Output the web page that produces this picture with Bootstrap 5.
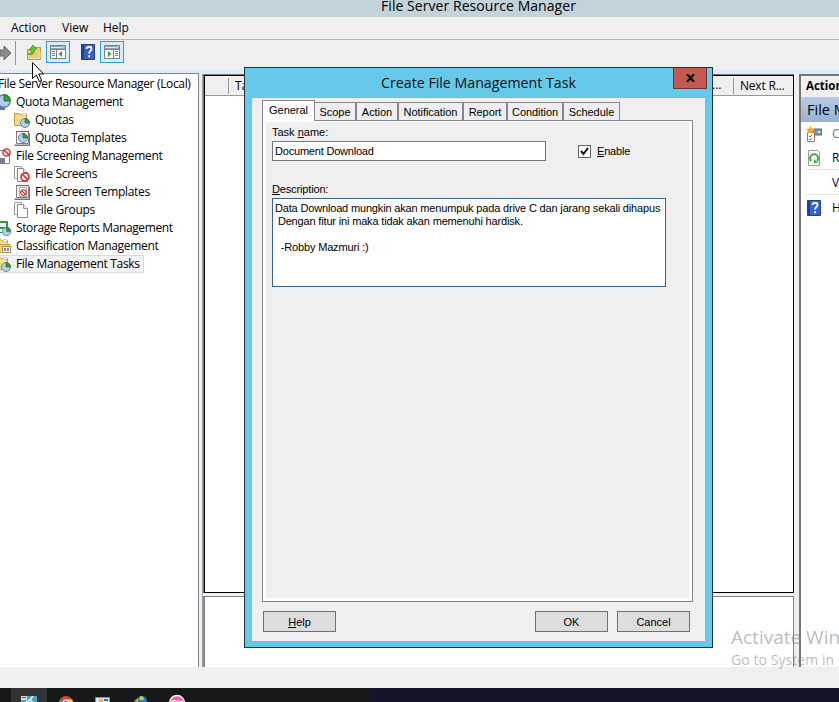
<!DOCTYPE html>
<html lang="en">
<head>
<meta charset="utf-8">
<meta name="viewport" content="width=device-width, initial-scale=1">
<title>File Server Resource Manager</title>
<link href="https://cdn.jsdelivr.net/npm/bootstrap@5.3.0/dist/css/bootstrap.min.css" rel="stylesheet">
<style>
body{width:839px;height:702px;margin:0;background:#efefef;color:#000;font:12px/18px "Open Sans","Noto Sans",sans-serif;white-space:nowrap}
svg{display:block;flex:none}
.titlebar{height:17px;background:#c2d4da}
.win-title{font-size:14px;line-height:20px;margin:-4px 0 0 381px;letter-spacing:.06px}
.menus{height:23px;border-bottom:1px solid #b5b5b5;padding:2px 0 0 11px}
.menus span{line-height:18px}
.m1{width:51px}.m2{width:41px}
.tools{height:33px;padding-top:1px}
.arrow-btn{width:16px;height:24px;border-right:1px solid #999}
.up-ic{margin:4px 4px 0 10px}
.help-ic{margin:3px 5px 0 11px}
.tool-on{width:24px;height:22px;border:1px solid #2a9fd8;background:#d9edf9}
.panes{height:594px}
.tools::after{content:"";position:absolute;left:0;top:69px;width:839px;height:5px;background:#e3ebfa}
.tree{width:199px;position:relative;border-top:1px solid #80848c;border-right:1px solid #80848c;background:#fff;padding-top:1px;letter-spacing:-.32px}
.tree .tr{height:18px;gap:5px}
.t0{margin-left:-2px;letter-spacing:-.34px}
.t8{letter-spacing:-.4px}
.lv0{margin-left:-5px}.lv1{margin-left:14px}
.tree .picked{width:144px;background:#f2f2f2;border:1px solid #d9d9d9;border-left:0}
.splitter{width:4px;border-right:1px solid #a0a0a0}
.center-col{width:591px;padding-top:1px;position:relative}
.list-pane{height:519px;background:#fff;border:solid #777;border-width:1px 0 0 1px}
.list-in{height:518px;border:1px solid #000}
.list-head{height:20px;background:#efefef;border-bottom:1px solid #999}
.hd{border-left:1px solid #999;height:16px;margin-top:2px;padding-left:6px;line-height:16px;letter-spacing:-.2px}
.hd-blank{width:23px}.hd-task{width:475px}.hd-dots{width:30px;padding-left:9px;letter-spacing:0}
.low-pane{height:71px;margin-top:3px;background:#fff;border:solid #80848c;border-width:1px 1px 0 2px}
.gap-r{width:5px}
.side{width:40px;height:593px;margin-top:1px;position:relative;background:#fff;border:solid #777;border-width:2px 0 0 2px}
.side-h{height:21px;font-weight:700;padding-left:5px;line-height:20px;font-size:11.5px;background:#f0f0f0}
.side-g{height:25px;background:linear-gradient(#b7cbe3,#96b2d3);font-size:14.5px;line-height:25px;padding-left:6px}
.side-i{height:24px;padding-left:5px;gap:10px}
.side-i .ic{width:16px;flex:none}
.q-ic{margin:0 1px}
.side-line{height:1px;background:#e2e2e2;margin:-1px 0 0 5px}
.side-line+.side-i{height:25px;padding-top:1px}
.bar-status{height:21px;background:#efefef}
.taskbar{height:14px;background:linear-gradient(90deg,#171918 370px,#14152a 370px)}
.tb-run{width:36px;background:#333;margin-left:11px}
.dlg{left:244px;top:67px;width:469px;height:581px;background:#66c9ea;border:1px solid #25323a;padding:29px 7px 6px;font:11px/13px "Liberation Sans",Arial,sans-serif}
.dlg-title{left:0;right:0;top:5px;text-align:center;font:14.2px/20px "Open Sans",sans-serif;color:#111}
.dlg-x{right:5px;top:0;width:34px;height:21px;background:#c35a51;border:1px solid #6d3433;border-top:0}
.dlg-in{height:545px;background:#efefef;border:solid #8bb4c6;border-width:1px 0;padding:2px 12px 0 10px}
.tabs-row{height:20px}
.tb{height:18px;border:1px solid #85858f;border-bottom:0;background:#efefef;text-align:center;line-height:19px;letter-spacing:-.05px}
.tb.on{height:21px;background:#fff;width:53px;line-height:19px;z-index:1}
.w2{width:41px;border-left:0}.w3{width:42px}.w4{width:65px}.w5{width:44px}.w6{width:56px}.w7{width:57px}
.pg{height:482px;border:1px solid #85858f;box-shadow:inset -3px -3px #fff,inset 3px 1px #fff;padding:5px 9px}
.fld{width:274px;height:20px;margin-top:2px;border:1px solid #777;background:#fff;padding:3px 2px;line-height:12px;letter-spacing:-.2px}
.ck{width:13px;height:13px;margin:2px 6px 0 32px;border:1px solid #666;background:#fff}
.en-lb{margin-top:3px;letter-spacing:-.2px}
.desc-lb{margin:22px 0 2px;letter-spacing:-.15px}
.memo{width:394px;height:89px;border:1px solid #36648b;background:#fff;padding:3px 2px;white-space:pre;letter-spacing:-.165px}
.foot{margin:9px 3px 0 1px}
.b3{width:73px;height:21px;border:1px solid #707070;background:#ddd;text-align:center;line-height:20px}
.b-last{margin-left:9px}
.wm{left:731px;top:625px;width:108px;color:rgba(130,130,130,.55);overflow:hidden}
.wm1{font-size:19px;line-height:24px}.wm2{font-size:14px;line-height:21px;letter-spacing:.06px}
.ptr{left:32px;top:62px}
u{text-underline-offset:1px}
</style>
<script src="https://cdn.jsdelivr.net/npm/bootstrap@5.3.0/dist/js/bootstrap.bundle.min.js"></script>
</head>
<body class="overflow-hidden position-relative">
<svg width="0" height="0" class="position-absolute">
<defs>
<symbol id="pie" viewBox="0 0 10 10"><circle cx="5" cy="5" r="4.500" fill="#b5cdec" stroke="#6683ad"/><path d="M5 5V.5A4.500 4.500 0 0 1 9.500 5z" fill="#35a02f" stroke="#216c20" stroke-width=".6"/></symbol>
<symbol id="no" viewBox="0 0 10 10"><circle cx="5" cy="5" r="4" fill="#fbe3e2" stroke="#cf2e2e" stroke-width="1.600"/><path d="M2.300 2.300l5.400 5.400" stroke="#cf2e2e" stroke-width="1.500"/></symbol>
<symbol id="folder" viewBox="0 0 16 16"><path d="M.5 1.500h5l1 1h6v11H.5z" fill="#f3d680" stroke="#c59b45"/><path d="M8 1.500h4v2H8z" fill="#fff" stroke="#ccb27a" stroke-width=".5"/><path d="M1 5h11v1H1z" fill="#fbebb3"/></symbol>
<symbol id="page" viewBox="0 0 16 16"><path d="M.5.500h7v12h-7z" fill="#fff" stroke="#999"/><path d="M3.500 2.500h6l4 4v9h-10z" fill="#fff" stroke="#888"/><path d="M9.500 2.500v4h4" fill="#eee" stroke="#999"/></symbol>
<symbol id="tmpl" viewBox="0 0 16 16"><path d="M2.500 1.500h12v12h-12z" fill="#f5f5f5" stroke="#8b7c78"/><path d="M2 1.500h13" stroke="#a35b4d" stroke-width="1.200"/><path d="M.5 15.200h15V3" fill="none" stroke="#777" stroke-width="1.400"/></symbol>
<symbol id="help" viewBox="0 0 14 16"><path d="M.5.500h13v15H.5z" fill="#3762c5" stroke="#233f94"/><path d="M1 1h2v14H1z" fill="#203f9c"/><path d="M5.500 5c0-3 5-3 5 0 0 2-2.400 2-2.400 4.600" fill="none" stroke="#fff" stroke-width="1.800"/><path d="M7.200 11.300H9v2H7.200z" fill="#fff"/></symbol>
<symbol id="console" viewBox="0 0 16 14"><path d="M.5.500h15v13H.5z" fill="#fff" stroke="#75818d"/><path d="M1 1h14v3H1z" fill="#9aa4ae"/><path d="M1 2.500h11" stroke="#e4e8ec"/><path d="M12.500 1.500h2v1h-2z" fill="#fff"/><path d="M1 4.500h14" stroke="#75818d"/></symbol>
</defs>
</svg>

<div class="titlebar d-flex"><div class="win-title">File Server Resource Manager</div></div>
<div class="menus d-flex"><span class="m1">Action</span><span class="m2">View</span><span>Help</span></div>
<div class="tools d-flex align-items-start">
  <div class="arrow-btn d-flex align-items-center"><svg width="12" height="16"><path d="M0 5h4V1l7 7-7 7v-4H0z" fill="#8b8b8b" stroke="#686868"/></svg></div>
  <svg width="16" height="16" class="up-ic"><path d="M1.500 4.500h5l1-2h7v12h-13z" fill="#eccb73" stroke="#bf973e"/><path d="M2 13.500h12V7" fill="none" stroke="#f8e6a7"/><path d="M2 9C5 9 6 7 5.500 5H3l4-5 4 4H8.500C9 8 6 11 2 9z" fill="#58c936" stroke="#2f9a27" stroke-width=".7"/></svg>
  <div class="tool-on d-flex align-items-center justify-content-center"><svg width="16" height="14"><use href="#console"/><path d="M6.500 5v8" stroke="#75818d"/><path d="M2 6.500h3M2 8.500h3M2 10.500h3" stroke="#5a86b5"/><path d="M12 6v6L8.500 9z" fill="#35a526"/></svg></div>
  <svg width="14" height="16" class="help-ic"><use href="#help"/></svg>
  <div class="tool-on d-flex align-items-center justify-content-center"><svg width="16" height="14"><use href="#console"/><path d="M9.500 5v8" stroke="#75818d"/><path d="M11 6.500h3M11 8.500h3M11 10.500h3" stroke="#5a86b5"/><path d="M4 6v6l3.500-3z" fill="#35a526"/></svg></div>
</div>

<div class="panes d-flex">
  <div class="tree flex-shrink-0">
    <div class="tr t0">File Server Resource Manager (Local)</div>
    <div class="tr d-flex align-items-center lv0"><svg width="16" height="16"><path d="M2 12h8v4H2z" fill="#68798a"/><use href="#pie" x="2" width="14" height="14"/></svg><span>Quota Management</span></div>
    <div class="tr d-flex align-items-center lv1"><svg width="16" height="16"><use href="#folder"/><use href="#pie" x="6" y="6" width="10" height="10"/></svg><span>Quotas</span></div>
    <div class="tr d-flex align-items-center lv1"><svg width="16" height="16"><use href="#tmpl"/><use href="#pie" x="4" y="3" width="10" height="10"/></svg><span>Quota Templates</span></div>
    <div class="tr d-flex align-items-center lv0"><svg width="16" height="16"><path d="M4.500 2.500h10v13h-10z" fill="#fff" stroke="#888"/><path d="M2 10h8v5H2z" fill="#718092"/><use href="#no" x="7" y="0" width="9" height="9"/></svg><span>File Screening Management</span></div>
    <div class="tr d-flex align-items-center lv1"><svg width="16" height="16"><use href="#page"/><use href="#no" x="6" y="6" width="10" height="10"/></svg><span>File Screens</span></div>
    <div class="tr d-flex align-items-center lv1"><svg width="16" height="16"><use href="#tmpl"/><path d="M5.500 3.500h7v9h-7z" fill="#fff" stroke="#aaa"/><use href="#no" x="6" y="5" width="7" height="7"/></svg><span>File Screen Templates</span></div>
    <div class="tr d-flex align-items-center lv1"><svg width="16" height="16"><use href="#page"/></svg><span>File Groups</span></div>
    <div class="tr d-flex align-items-center lv0"><svg width="16" height="16"><path d="M1 1h12v12H1z" fill="#2e9e44"/><path d="M4 3h7v4H4zM4 9h6v3H4z" fill="#eaf6eb"/><use href="#pie" x="7" y="7" width="9" height="9"/></svg><span class="t8">Storage Reports Management</span></div>
    <div class="tr d-flex align-items-center lv0"><svg width="16" height="16"><use href="#folder"/><path d="M2 6.500h13v8H2z" fill="#f0cf76" stroke="#c59b45"/><path d="M7.500 8.500h8v6h-8z" fill="#fff" stroke="#b58b38"/><path d="M9 10h2v3H9zM12 10h2v3h-2z" fill="#6b8bc0"/></svg><span>Classification Management</span></div>
    <div class="tr d-flex align-items-center picked"><svg width="16" height="16" class="lv0"><use href="#folder"/><use href="#pie" x="6" y="6" width="10" height="10"/></svg><span>File Management Tasks</span></div>
  </div>
  <div class="splitter flex-shrink-0"></div>
  <div class="center-col flex-shrink-0">
    <div class="list-pane"><div class="list-in"><div class="list-head d-flex"><div class="hd-blank"></div><div class="hd hd-task">Task Name</div><div class="hd-dots">...</div><div class="hd">Next R...</div></div></div></div>
    <div class="low-pane"></div>
  </div>
  <div class="gap-r flex-shrink-0"></div>
  <div class="side flex-shrink-0 overflow-hidden">
    <div class="side-h">Actions</div>
    <div class="side-g">File Management Tasks</div>
    <div class="side-i d-flex align-items-center"><svg width="16" height="16"><path d="M7 3h9v6H7z" fill="#8293a5" stroke="#59697a"/><path d="M12 5h2v2h-2z" fill="#dfe5ea"/><path d="M1.500 6.500h7v9h-7z" fill="#fff" stroke="#a57a39"/><path d="M3 10l1 1 2-2M3 13l1 1 2-2" stroke="#3989cd" fill="none"/><path d="M4.500 0l1.300 2.500L9 3 7 5l.6 3-3.100-1.500L1.500 8 2 5 0 3l3.200-.5z" fill="#f5a623"/></svg><span class="text-secondary">Create File Management Task...</span></div>
    <div class="side-i d-flex align-items-center"><svg width="16" height="16"><path d="M2.500.500h9l2 2v13h-11z" fill="#fff" stroke="#999"/><path d="M5.200 11a4 4 0 1 1 5.800 0" fill="none" stroke="#39a83a" stroke-width="2"/><path d="M8 9v4h4z" fill="#39a83a"/></svg><span>Refresh</span></div>
    <div class="side-line"></div>
    <div class="side-i d-flex align-items-center"><span class="ic"></span><span>View</span></div>
    <div class="side-line"></div>
    <div class="side-i d-flex align-items-center"><svg width="14" height="16" class="q-ic"><use href="#help"/></svg><span>Help</span></div>
  </div>
</div>
<div class="bar-status"></div>
<div class="taskbar d-flex overflow-hidden">
  <div class="tb-run d-flex justify-content-center"><svg width="16" height="14" class="mt-2"><path d="M0 0h16v14H0z" fill="#4ba3c9"/><path d="M0 0h6v4H0z" fill="#d9dde0"/><path d="M1 1.500h4" stroke="#555"/><path d="M5 6l4-2M9 4l3-4M9 4l5 4" stroke="#e9f4f8" stroke-width="1.500"/></svg></div>
  <svg width="150" height="14"><circle cx="19" cy="15" r="7" fill="#dc4337"/><path d="M19 11.500h6.200a7 7 0 0 1 .8 3h-6z" fill="#ffc928"/><path d="M12.800 11.800L17 15h-5z" fill="#36a852"/><circle cx="19" cy="15" r="3.400" fill="#fff"/><circle cx="19" cy="15" r="2.400" fill="#3f7de8"/><path d="M48.500 9.500h14V15h-14z" fill="#d5effb" stroke="#39a4dc"/><circle cx="54" cy="13" r="2.300" fill="#f2b635"/><path d="M57 11h4v2h-4z" fill="#2370b8"/><circle cx="95" cy="13" r="5" fill="#3476bb"/><path d="M93 8.500c3-1 5 2 3 4l-4-1z" fill="#b9d24b"/><path d="M87 13l4-3v4z" fill="#f0a525"/><circle cx="130" cy="15" r="7.500" fill="#ff5aa8" stroke="#fff" stroke-width="1.400"/><path d="M125 14v-1.500h2V14m0-1.500h2V14m2-1.500V14h2v-1.500m0 1.500h2v-1.500" fill="none" stroke="#fff"/></svg>
</div>

<div class="wm position-absolute"><div class="wm1">Activate Windows</div><div class="wm2">Go to System in</div></div>

<div class="dlg position-absolute">
  <div class="dlg-title position-absolute">Create File Management Task</div>
  <div class="dlg-x position-absolute d-flex align-items-center justify-content-center"><svg width="9" height="8"><path d="M1 0l7 8M8 0L1 8" stroke="#000" stroke-width="2"/></svg></div>
  <div class="dlg-in">
    <div class="tabs-row d-flex align-items-end">
      <div class="tb on position-relative align-self-start">General</div><div class="tb w2">Scope</div><div class="tb w3">Action</div><div class="tb w4">Notification</div><div class="tb w5">Report</div><div class="tb w6">Condition</div><div class="tb w7">Schedule</div>
    </div>
    <div class="pg">
      <div>Task <u>n</u>ame:</div>
      <div class="d-flex align-items-center"><div class="fld">Document Download</div><div class="ck"><svg width="11" height="11"><path d="M2 5l2.500 3L9 2" fill="none" stroke="#111" stroke-width="2"/></svg></div><span class="en-lb"><u>E</u>nable</span></div>
      <div class="desc-lb"><u>D</u>escription:</div>
      <div class="memo">Data Download mungkin akan menumpuk pada drive C dan jarang sekali dihapus
 Dengan fitur ini maka tidak akan memenuhi hardisk.

  -Robby Mazmuri :)</div>
    </div>
    <div class="d-flex foot"><div class="b3"><u>H</u>elp</div><div class="b3 ms-auto">OK</div><div class="b3 b-last">Cancel</div></div>
  </div>
</div>
<svg class="ptr position-absolute" width="13" height="21"><path d="M.5.500v16l3.800-3.500 3 6.500 2.400-1-3-6.500h5z" fill="#fff" stroke="#000"/></svg>
</body>
</html>
